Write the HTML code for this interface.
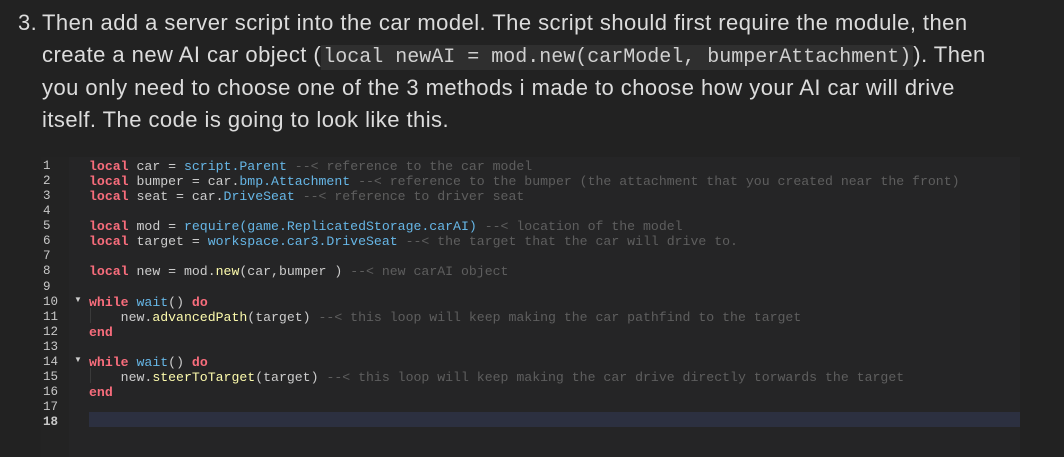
<!DOCTYPE html>
<html><head><meta charset="utf-8"><style>
html,body{margin:0;padding:0;background:#222222;width:1064px;height:457px;overflow:hidden}
.p{position:absolute;left:0;top:0;font-family:"Liberation Sans",sans-serif;font-size:22px;letter-spacing:0.45px;color:#dcdcdc}
.l{position:absolute;left:42px;white-space:nowrap}
.n{position:absolute;left:18px}
code{font-family:"Liberation Mono",monospace;font-size:20px;letter-spacing:0;background:#2f2f2f;padding:1px 2px;color:#d0d0d0}
.img{position:absolute;left:41px;top:157px;width:979px;height:300px;background:#252526}
.gut{position:absolute;left:41px;top:157px;width:28px;height:300px;background:#232323}
.code{position:absolute;left:0;top:159px;font-family:"Liberation Mono",monospace;font-size:13.2px;line-height:15.06px;white-space:pre;color:#cccccc}
.ln{position:absolute;left:43px;top:159px;font-family:"Liberation Mono",monospace;font-size:12.5px;line-height:15.06px;color:#c8c8c8;white-space:pre}
.k{color:#f86d7c;font-weight:bold}.b{color:#66b6e6}.c{color:#5e5e5e}.f{color:#fdfbac}
.hl{position:absolute;left:89px;top:412px;width:931px;height:15px;background:#2c3040}
.ar{position:absolute;left:74px;font-size:8px;color:#ccc}
.bar{position:absolute;left:90px;width:1px;height:15px;background:#3a3a3a}
</style></head><body>
<div class="p">
<div class="n" style="top:10px">3.</div>
<div class="l" style="top:10px">Then add a server script into the car model. The script should first require the module, then</div>
<div class="l" style="top:42px">create a new AI car object (<code>local newAI = mod.new(carModel, bumperAttachment)</code>). Then</div>
<div class="l" style="top:75px">you only need to choose one of the 3 methods i made to choose how your AI car will drive</div>
<div class="l" style="top:107px">itself. The code is going to look like this.</div>
</div>
<div class="img"></div><div class="gut"></div>
<div class="hl"></div>
<div class="bar" style="top:308px"></div><div class="bar" style="top:368px"></div>
<div class="ar" style="top:295px">▼</div><div class="ar" style="top:355px">▼</div>
<div class="ln">1
2
3
4
5
6
7
8
9
10
11
12
13
14
15
16
17
<b>18</b></div>
<div class="code" style="left:89px"><span class="k">local</span> car = <span class="b">script.Parent</span> <span class="c">--&lt; reference to the car model</span>
<span class="k">local</span> bumper = car.<span class="b">bmp.Attachment</span> <span class="c">--&lt; reference to the bumper (the attachment that you created near the front)</span>
<span class="k">local</span> seat = car.<span class="b">DriveSeat</span> <span class="c">--&lt; reference to driver seat</span>

<span class="k">local</span> mod = <span class="b">require(game.ReplicatedStorage.carAI)</span> <span class="c">--&lt; location of the model</span>
<span class="k">local</span> target = <span class="b">workspace.car3.DriveSeat</span> <span class="c">--&lt; the target that the car will drive to.</span>

<span class="k">local</span> new = mod.<span class="f">new</span>(car,bumper ) <span class="c">--&lt; new carAI object</span>

<span class="k">while</span> <span class="b">wait</span>() <span class="k">do</span>
    new.<span class="f">advancedPath</span>(target) <span class="c">--&lt; this loop will keep making the car pathfind to the target</span>
<span class="k">end</span>

<span class="k">while</span> <span class="b">wait</span>() <span class="k">do</span>
    new.<span class="f">steerToTarget</span>(target) <span class="c">--&lt; this loop will keep making the car drive directly torwards the target</span>
<span class="k">end</span>
</div>
</body></html>
